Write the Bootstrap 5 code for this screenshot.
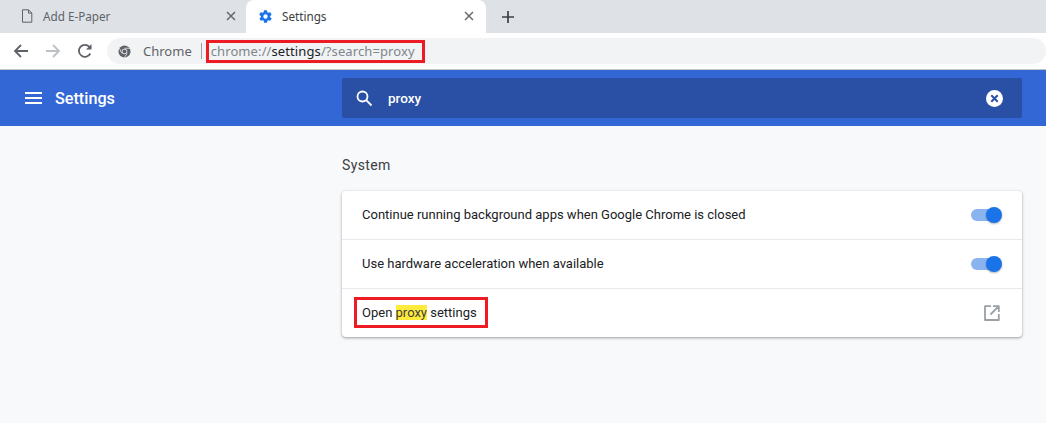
<!DOCTYPE html>
<html lang="en"><head><meta charset="utf-8"><title>Settings</title>
<link href="https://cdn.jsdelivr.net/npm/bootstrap@5.3.0/dist/css/bootstrap.min.css" rel="stylesheet">
<style>
html,body{height:100%;overflow:hidden}
body{background:#f8f9fa;font-family:Roboto,"Liberation Sans",sans-serif;position:relative;color:#202124}
.tabstrip{height:33px;background:#dee1e6;padding-left:8px;font:11.7px "Noto Sans","Open Sans",sans-serif}
.tabitem{width:238px;height:33px;padding:0 10px 1px 13px;color:#5f6368}
.tabitem.on{background:#fff;color:#3c4043;width:240px;border-radius:8px 8px 0 0;padding-left:12px;padding-right:12px}
.tabname{margin-left:10px}
.tabitem.on .tabname{margin-left:9px}
.tabicon{display:block;flex:none}
.plusbtn{margin-left:16px}
.toolbar{height:37px;background:#fff;border-bottom:1px solid #c4c6c9;padding-left:13px}
.navico{margin-right:16px;flex:none}
.omni{width:940px;height:26px;border-radius:13px;background:#f1f3f4;margin-left:-2px;padding-left:11px;font:13px "Noto Sans","Open Sans",sans-serif;color:#5f6368}
.omnilabel{margin-left:12px}
.omnisep{width:1px;height:16px;background:#9aa0a6;margin:0 9px 0 9px}
.urltext{color:#80868b;letter-spacing:.1px}
.urltext b{font-weight:400;color:#202124}
.bluebar{height:56px;background:#3367d6;color:#fff;padding-left:25px}
.burger{width:17px;flex:none}
.burger i{display:block;height:2px;background:#fff;margin:3px 0}
.settitle{font-size:16.200px;font-weight:500;margin-left:13px;width:287px;padding-top:2px}
.searchbox{width:680px;height:40px;background:#2a50a6;border-radius:2px;padding:0 19px 0 14px;font-size:13.5px;font-weight:500}
.searchword{margin-left:15px}
.mainarea{width:680px;margin-left:342px}
.sectitle{font-size:14px;letter-spacing:.35px;font-weight:400;color:#3c4043;margin:31px 0 18px;line-height:16px}
.setcard{background:#fff;border-radius:4px;box-shadow:0 1px 2px rgba(60,64,67,.3),0 1px 3px 1px rgba(60,64,67,.15);font-size:13px}
.setrow{height:49px;padding:0 20px;border-top:1px solid #e8eaed}
.setrow:first-child{height:48px;border-top:0}
.setrow:last-child{padding-right:22px}
.toggle{width:30px;height:12px;border-radius:6px;background:#8ab4f0;position:relative;margin-right:1px}
.toggle::after{content:"";position:absolute;right:-1px;top:-2.5px;width:16px;height:16px;border-radius:50%;background:#1a73e8;box-shadow:0 1px 2px rgba(0,0,0,.3)}
.hlword{background:#ffeb3b;color:#3c4043}
.redframe{position:absolute;border:3px solid #ed1c24;pointer-events:none}
.redurl{left:206px;top:40px;width:219px;height:23px}
.redopen{left:354px;top:297px;width:134px;height:31px}
</style></head>
<body>
<div class="tabstrip d-flex">
 <div class="tabitem d-flex align-items-center">
  <svg class="tabicon" width="12" height="14" viewBox="0 0 12 14" fill="none" stroke="#5f6368" stroke-width="1"><path d="M1.5 .8H7.5L10.8 4.1V13.2H1.5Z M7.5 .8V4.1H10.8"/></svg>
  <span class="tabname flex-grow-1">Add E-Paper</span>
  <svg width="10" height="10" viewBox="0 0 10 10" stroke="#5f6368" stroke-width="1.4"><path d="M1 1L9 9M9 1L1 9"/></svg>
 </div>
 <div class="tabitem on d-flex align-items-center">
  <svg class="tabicon" width="15" height="15" viewBox="0 0 24 24" fill="#1a73e8"><path d="M19.4 13a7.5 7.5 0 0 0 0-2l2.1-1.6a.5.5 0 0 0 .1-.6l-2-3.5a.5.5 0 0 0-.6-.2l-2.5 1a7.3 7.3 0 0 0-1.7-1L14.4 2.4a.5.5 0 0 0-.5-.4h-4a.5.5 0 0 0-.5.4L9 5.1a7.7 7.7 0 0 0-1.7 1l-2.5-1a.5.5 0 0 0-.6.2l-2 3.5a.5.5 0 0 0 .1.6L4.600 11a7.900 7.900 0 0 0 0 2l-2.100 1.600a.5.5 0 0 0-.1.6l2 3.500a.5.5 0 0 0 .6.2l2.500-1a7.300 7.300 0 0 0 1.700 1l.4 2.700a.5.5 0 0 0 .5.4h4a.5.5 0 0 0 .5-.4l.4-2.700a7.700 7.700 0 0 0 1.700-1l2.500 1a.5.5 0 0 0 .6-.2l2-3.500a.5.5 0 0 0-.1-.6ZM12 15.500a3.500 3.500 0 1 1 0-7 3.500 3.500 0 0 1 0 7Z"/></svg>
  <span class="tabname flex-grow-1">Settings</span>
  <svg width="10" height="10" viewBox="0 0 10 10" stroke="#5f6368" stroke-width="1.4"><path d="M1 1L9 9M9 1L1 9"/></svg>
 </div>
 <div class="plusbtn d-flex align-items-center">
  <svg width="12" height="12" viewBox="0 0 12 12" stroke="#3c4043" stroke-width="1.700"><path d="M6 0V12M0 6H12"/></svg>
 </div>
</div>
<div class="toolbar d-flex align-items-center">
 <svg class="navico" width="16" height="16" viewBox="0 0 16 16" fill="none" stroke="#5f6368" stroke-width="1.800"><path d="M15 8H2M8 2L2 8L8 14"/></svg>
 <svg class="navico" width="16" height="16" viewBox="0 0 16 16" fill="none" stroke="#bdc1c6" stroke-width="1.800"><path d="M1 8H14M8 2L14 8L8 14"/></svg>
 <svg class="navico" width="16" height="16" viewBox="0 0 16 16" fill="none" stroke="#5f6368" stroke-width="1.800"><path d="M13.300 10.500A6 6 0 1 1 12.400 3.800L14 5.400"/><path d="M14.500 1V6.500H9Z" fill="#5f6368" stroke="none"/></svg>
 <div class="omni d-flex align-items-center">
  <svg width="13" height="13" viewBox="0 0 14 14" class="flex-none"><circle cx="7" cy="7" r="6.500" fill="#5f6368"/><path d="M7 3.500H13M4 8.800L1.500 3.500M9.800 9L7 13.500" stroke="#f1f3f4" stroke-width=".8"/><circle cx="7" cy="7" r="3" fill="#f1f3f4"/><circle cx="7" cy="7" r="2.200" fill="#5f6368"/></svg>
  <span class="omnilabel">Chrome</span><span class="omnisep"></span>
  <span class="urltext">chrome://<b>settings</b>/?search=proxy</span>
 </div>
</div>
<div class="bluebar d-flex align-items-center">
 <div class="burger"><i></i><i></i><i></i></div>
 <div class="settitle">Settings</div>
 <div class="searchbox d-flex align-items-center">
  <svg width="17" height="17" viewBox="0 0 17 17" fill="none" stroke="#fff" stroke-width="1.800"><circle cx="6.500" cy="6.500" r="5"/><path d="M10.200 10.200L15.500 15.500"/></svg>
  <span class="searchword flex-grow-1">proxy</span>
  <svg width="17" height="17" viewBox="0 0 17 17"><circle cx="8.500" cy="8.500" r="8.500" fill="#fff"/><path d="M5.300 5.300L11.700 11.700M11.700 5.300L5.300 11.700" stroke="#2a50a6" stroke-width="2"/></svg>
 </div>
</div>
<div class="mainarea">
 <div class="sectitle">System</div>
 <div class="setcard">
  <div class="setrow d-flex align-items-center justify-content-between"><span>Continue running background apps when Google Chrome is closed</span><span class="toggle"></span></div>
  <div class="setrow d-flex align-items-center justify-content-between"><span>Use hardware acceleration when available</span><span class="toggle"></span></div>
  <div class="setrow d-flex align-items-center justify-content-between"><span>Open <span class="hlword">proxy</span> settings</span>
   <svg width="16" height="16" viewBox="0 0 16 16" fill="none" stroke="#9aa0a6" stroke-width="1.800" stroke-linejoin="round"><path d="M7 1.200H1V15H14.800V9M9 1.200H14.800V7M14.800 1.200L6.500 9.500"/></svg></div>
 </div>
</div>
<div class="redframe redurl"></div>
<div class="redframe redopen"></div>
<script src="https://cdn.jsdelivr.net/npm/bootstrap@5.3.0/dist/js/bootstrap.bundle.min.js"></script>
</body></html>
